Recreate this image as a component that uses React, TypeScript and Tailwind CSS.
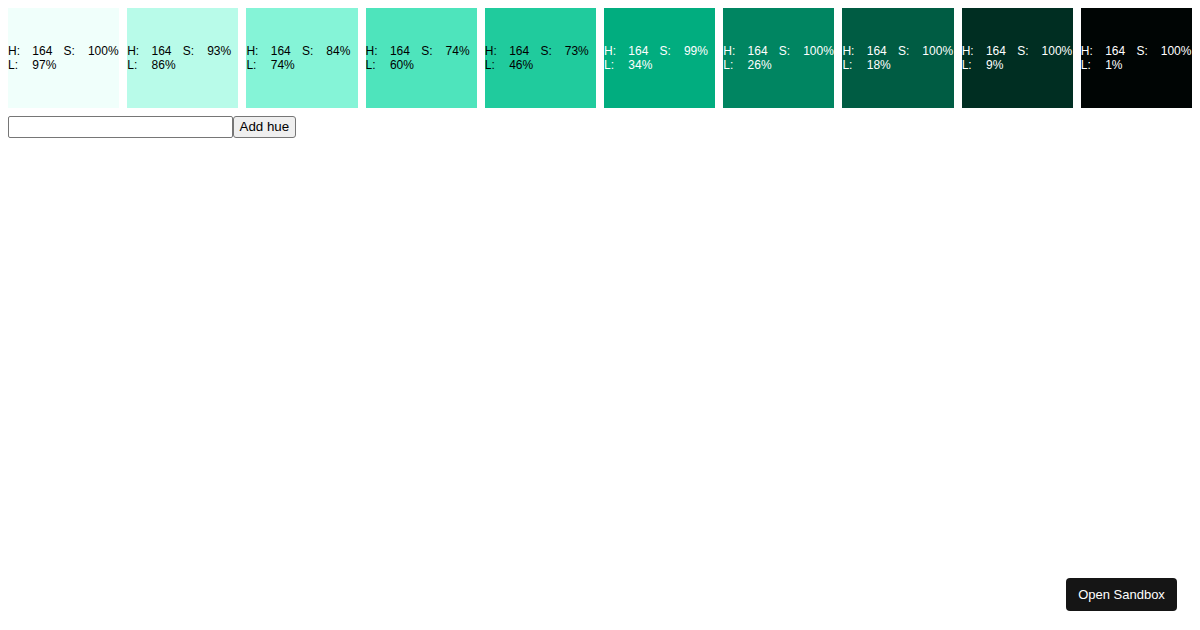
import { useState } from 'react';

type Swatch = { s: number; l: number; bg: string; dark: boolean };

// hue 164 scale, light to dark
const swatches: Swatch[] = [
  { s: 100, l: 97, bg: 'bg-[#f0fffb]', dark: false },
  { s: 93, l: 86, bg: 'bg-[#b8fbe9]', dark: false },
  { s: 84, l: 74, bg: 'bg-[#85f4d7]', dark: false },
  { s: 74, l: 60, bg: 'bg-[#4ee4bc]', dark: false },
  { s: 73, l: 46, bg: 'bg-[#20cb9d]', dark: false },
  { s: 99, l: 34, bg: 'bg-[#01ad7f]', dark: true },
  { s: 100, l: 26, bg: 'bg-[#008561]', dark: true },
  { s: 100, l: 18, bg: 'bg-[#005c43]', dark: true },
  { s: 100, l: 9, bg: 'bg-[#002e22]', dark: true },
  { s: 100, l: 1, bg: 'bg-[#000504]', dark: true },
];

function SwatchBox({ swatch }: { swatch: Swatch }) {
  return (
    <div className={`flex-1 h-[100px] flex items-center ${swatch.bg} ${swatch.dark ? 'text-white' : 'text-black'}`}>
      <dl className="w-full grid grid-cols-[7fr_9fr_7fr_9fr] text-[12px] leading-[14px] whitespace-nowrap">
        <dt>H:</dt>
        <dd>164</dd>
        <dt>S:</dt>
        <dd>{swatch.s}%</dd>
        <dt>L:</dt>
        <dd>{swatch.l}%</dd>
      </dl>
    </div>
  );
}

export default function App() {
  const [hue, setHue] = useState('');

  return (
    <div className="min-h-screen bg-white p-2 font-['Liberation_Sans',Arial,sans-serif] text-black">
      <div className="flex gap-2">
        {swatches.map((swatch) => (
          <SwatchBox key={swatch.l} swatch={swatch} />
        ))}
      </div>

      <div className="flex mt-2">
        <input
          type="text"
          value={hue}
          onChange={(e) => setHue(e.target.value)}
          className="w-[225px] h-[22px] border border-[#767676] rounded-[2px] px-[2px] text-[13.33px] bg-white"
        />
        <button className="h-[22px] px-[5.5px] border border-[#767676] rounded-[3px] bg-[#efefef] text-[13.33px] leading-none text-black">
          Add hue
        </button>
      </div>

      {/* sandbox overlay */}
      <button className="fixed right-[23px] bottom-[19px] w-[111px] h-[33px] flex items-center justify-center rounded-[4px] bg-[#151515] text-white text-[13px]">
        Open Sandbox
      </button>
    </div>
  );
}
